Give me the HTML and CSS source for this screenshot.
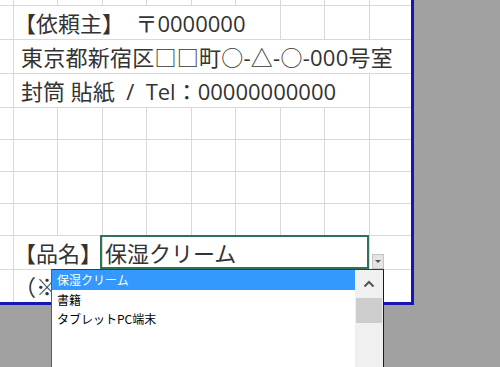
FILE: index.html
```html
<!DOCTYPE html>
<html lang="ja">
<head>
<meta charset="utf-8">
<title>Sheet</title>
<link rel="stylesheet" href="styles.css">
</head>
<body>
<div class="stage">
  <div class="sheet">
    <!-- row 0 -->
    <div class="c"></div><div class="c"></div><div class="c"></div><div class="c"></div><div class="c"></div><div class="c"></div><div class="c"></div><div class="c"></div><div class="c"></div><div class="c last"></div>
    <!-- row 1 -->
    <div class="c"></div>
    <div class="c txt s6 r1">【依頼主】  〒0000000</div>
    <div class="c"></div><div class="c"></div><div class="c last"></div>
    <!-- row 2 -->
    <div class="c"></div>
    <div class="c txt s9 last r2">東京都新宿区□□町○-△-○-000号室</div>
    <!-- row 3 -->
    <div class="c"></div>
    <div class="c txt s8 r3">封筒 貼紙  /  Tel：00000000000</div>
    <div class="c last"></div>
    <!-- rows 4-7 -->
    <div class="c"></div><div class="c"></div><div class="c"></div><div class="c"></div><div class="c"></div><div class="c"></div><div class="c"></div><div class="c"></div><div class="c"></div><div class="c last"></div>
    <div class="c"></div><div class="c"></div><div class="c"></div><div class="c"></div><div class="c"></div><div class="c"></div><div class="c"></div><div class="c"></div><div class="c"></div><div class="c last"></div>
    <div class="c"></div><div class="c"></div><div class="c"></div><div class="c"></div><div class="c"></div><div class="c"></div><div class="c"></div><div class="c"></div><div class="c"></div><div class="c last"></div>
    <div class="c"></div><div class="c"></div><div class="c"></div><div class="c"></div><div class="c"></div><div class="c"></div><div class="c"></div><div class="c"></div><div class="c"></div><div class="c last"></div>
    <!-- row 8 -->
    <div class="c"></div>
    <div class="c txt s2 label">【品名】</div>
    <div class="c txt s6 value"><span class="val">保湿クリーム</span><span class="sel"></span><span class="dd-btn"><span class="tri"></span></span></div>
    <div class="c last"></div>
    <!-- row 9 -->
    <div class="c nob"></div>
    <div class="c txt s9 last nob note">（※</div>
  </div>

  <div class="list">
    <ul class="items">
      <li class="item on">保湿クリーム</li>
      <li class="item">書籍</li>
      <li class="item">タブレットPC端末</li>
    </ul>
    <div class="scroll">
      <div class="up"><svg width="12" height="8" viewBox="0 0 12 8"><path d="M1.5 6.5 L6 2 L10.5 6.5" fill="none" stroke="#555" stroke-width="2"/></svg></div>
      <div class="thumb"></div>
    </div>
  </div>
</div>
</body>
</html>
```

FILE: styles.css
```css
html, body {
  margin: 0;
  padding: 0;
}
body {
  background: #a0a0a0;
  width: 500px;
  height: 367px;
  overflow: hidden;
  font-family: "Noto Sans CJK JP", "Noto Sans", sans-serif;
}
.stage {
  position: relative;
  width: 500px;
  height: 367px;
}
.sheet {
  width: 411px;
  background: #fff;
  border-right: 3px solid #1616b0;
  border-bottom: 3px solid #1616b0;
  display: grid;
  grid-template-columns: 14px 44px 45px 44px 45px 44px 45px 44px 45px 41px;
  grid-template-rows: 6px 34px 34px 34px 32px 32px 32px 32px 34px 32px;
}
.c {
  box-sizing: border-box;
  border-right: 1px solid #d9d9d9;
  border-bottom: 1px solid #d9d9d9;
  min-width: 0;
}
.c.last { border-right: none; }
.c.nob { border-bottom: none; }
.s2 { grid-column: span 2; }
.s6 { grid-column: span 6; }
.s8 { grid-column: span 8; }
.s9 { grid-column: span 9; }

.txt {
  display: flex;
  align-items: center;
  white-space: nowrap;
  font-family: "Open Sans", "Noto Sans CJK JP", sans-serif;
  font-size: 22px;
  color: #333;
  padding-bottom: 2px;
  overflow: visible;
}
.r1 {
  padding-left: 0;
  white-space: pre;
}
.r2 {
  padding-left: 7px;
  letter-spacing: 0.25px;
}
.r3 {
  padding-left: 7px;
  white-space: pre;
}
.label {
  justify-content: flex-end;
  padding-right: 0;
}
.value {
  position: relative;
  padding-left: 2px;
}
.note {
  padding-left: 0;
}
.sel {
  position: absolute;
  left: -3px;
  top: -1px;
  right: 0;
  bottom: 0;
  border: 2px solid #2f7352;
  pointer-events: none;
}
.dd-btn {
  position: absolute;
  left: 269px;
  top: 18px;
  width: 12px;
  height: 15px;
  box-sizing: border-box;
  background: #e4e4e4;
  border: 1px solid #c4c4c4;
  display: flex;
  align-items: center;
  justify-content: center;
}
.tri {
  width: 0;
  height: 0;
  border-left: 3px solid transparent;
  border-right: 3px solid transparent;
  border-top: 3px solid #555;
  margin-top: -1px;
}

.list {
  position: absolute;
  left: 51px;
  top: 269px;
  width: 333px;
  height: 110px;
  box-sizing: border-box;
  background: #fff;
  border-left: 1px solid #5c5c5c;
  border-right: 1px solid #1a1a1a;
  border-top: 1px solid #3a3a3a;
  display: flex;
}
.items {
  list-style: none;
  margin: 0;
  padding: 0;
  flex: 1;
}
.item {
  height: 19.5px;
  line-height: 19.5px;
  padding-left: 5px;
  font-size: 12px;
  color: #000;
  white-space: nowrap;
}
.item.on {
  background: #3399ff;
  color: #fff;
}
.scroll {
  width: 28px;
  background: #f0f0f0;
  display: flex;
  flex-direction: column;
}
.up {
  height: 28px;
  display: flex;
  align-items: center;
  justify-content: center;
}
.thumb {
  height: 25px;
  margin: 0 1px;
  background: #cdcdcd;
}
```
